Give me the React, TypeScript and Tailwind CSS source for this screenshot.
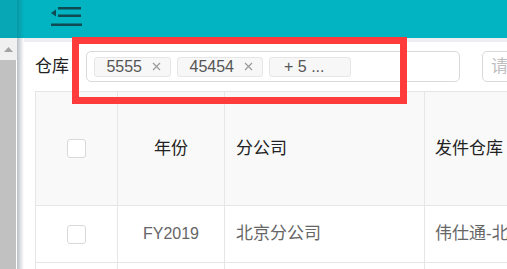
import React from 'react'

const cjk = { fontFamily: '"Liberation Sans", "Noto Sans CJK SC", sans-serif' }

function TagClose() {
  return (
    <svg width="9" height="9" viewBox="0 0 9 9" className="ml-[10px] shrink-0">
      <path d="M1 1 L8 8 M8 1 L1 8" stroke="#9a9a9a" strokeWidth="1.2" />
    </svg>
  )
}

function Tag({ text, closable = true, width }: { text: string; closable?: boolean; width: string }) {
  return (
    <div
      className={`flex h-[20px] shrink-0 items-center rounded-[3px] border border-[#e6e6e6] bg-[#f7f7f7] ${width} ${closable ? 'justify-end pr-[9px]' : 'pl-[14px]'}`}
    >
      <span className="text-[16px] leading-none text-[#555]">{text}</span>
      {closable && <TagClose />}
    </div>
  )
}

function Checkbox() {
  return <div className="h-[19px] w-[19px] rounded-[3px] border border-[#d9d9d9] bg-white" />
}

export default function App() {
  return (
    <div className="relative flex h-[269px] w-[507px] overflow-hidden bg-white" style={cjk}>
      {/* left scroll area */}
      <div className="flex w-[17px] shrink-0 flex-col">
        <div className="h-[38px] shrink-0 bg-[#07a7b5]" />
        <div className="flex h-[22px] shrink-0 items-start justify-center bg-[#f0f0f0] pt-[9px]">
          <svg width="9" height="5" viewBox="0 0 9 5">
            <path d="M0 5 L4.5 0 L9 5 Z" fill="#a3a3a3" />
          </svg>
        </div>
        <div className="mr-[1px] flex-1 bg-[#c1c1c1]" />
      </div>

      {/* shadow edge */}
      <div className="flex w-[7px] shrink-0 flex-col">
        <div className="h-[38px] shrink-0 bg-gradient-to-r from-[#0898a6] to-[#02b3c1]" />
        <div className="flex-1 bg-gradient-to-r from-[#b9bfc8] to-white" />
      </div>

      <div className="flex min-w-0 flex-1 flex-col">
        {/* top bar */}
        <div className="flex h-[38px] shrink-0 items-center bg-[#02b3c1] pl-[27px]">
          <svg width="31" height="20" viewBox="0 0 31 20" className="-mt-[5px]">
            <path d="M0 6 L5 2.5 L5 9.5 Z" fill="#0f4a52" />
            <rect x="7" y="0" width="23" height="2.5" fill="#0f4a52" />
            <rect x="7" y="7.5" width="23" height="2.5" fill="#0f4a52" />
            <rect x="0" y="16.5" width="31" height="2.5" fill="#0f4a52" />
          </svg>
        </div>
        <div className="h-[4px] shrink-0 bg-[#eceef1]" />

        {/* content */}
        <div className="flex min-h-0 flex-1 flex-col pl-[11px] pt-[9px]">
          <div className="flex h-[31px] shrink-0 items-center">
            <span className="w-[51px] shrink-0 text-[17px] text-[#222]">仓库</span>
            <div className="flex h-[31px] w-[374px] shrink-0 items-center gap-[6px] rounded-[5px] border border-[#d9d9d9] pl-[7px]">
              <Tag text="5555" width="w-[77px]" />
              <Tag text="45454" width="w-[86px]" />
              <Tag text="+ 5 ..." closable={false} width="w-[82px]" />
            </div>
            <div className="ml-[22px] flex h-[31px] w-[120px] shrink-0 items-center rounded-[5px] border border-[#d9d9d9] pl-[8px]">
              <span className="whitespace-nowrap text-[17px] text-[#bfbfbf]">请选择</span>
            </div>
          </div>

          <div className="mt-[9px] w-[600px] shrink-0 border-l border-t border-[#e6e6e6]">
            <div className="flex h-[114px] border-b border-[#e6e6e6] bg-[#f9f9f9]">
              <div className="flex w-[82px] shrink-0 items-center justify-center border-r border-[#e6e6e6]">
                <Checkbox />
              </div>
              <div className="flex w-[107px] shrink-0 items-center justify-center border-r border-[#e6e6e6] text-[17px] text-[#222]">
                年份
              </div>
              <div className="flex w-[200px] shrink-0 items-center border-r border-[#e6e6e6] pl-[11px] text-[17px] text-[#222]">
                分公司
              </div>
              <div className="flex flex-1 items-center pl-[10px] text-[17px] text-[#222]">发件仓库</div>
            </div>
            <div className="flex h-[57px] border-b border-[#e6e6e6]">
              <div className="flex w-[82px] shrink-0 items-center justify-center border-r border-[#e6e6e6]">
                <Checkbox />
              </div>
              <div className="flex w-[107px] shrink-0 items-center justify-center border-r border-[#e6e6e6] text-[16px] text-[#666]">
                FY2019
              </div>
              <div className="flex w-[200px] shrink-0 items-center border-r border-[#e6e6e6] pl-[11px] text-[17px] text-[#666]">
                北京分公司
              </div>
              <div className="flex flex-1 items-center whitespace-nowrap pl-[10px] text-[17px] text-[#666]">
                伟仕通-北京仓
              </div>
            </div>
            <div className="flex h-[57px]">
              <div className="w-[82px] shrink-0 border-r border-[#e6e6e6]" />
              <div className="w-[107px] shrink-0 border-r border-[#e6e6e6]" />
              <div className="w-[200px] shrink-0 border-r border-[#e6e6e6]" />
            </div>
          </div>
        </div>
      </div>

      {/* highlight box over the select */}
      <div className="pointer-events-none absolute left-[72px] top-[37px] h-[67px] w-[335px] border-[7px] border-[#ff3b3b]" />
    </div>
  )
}
